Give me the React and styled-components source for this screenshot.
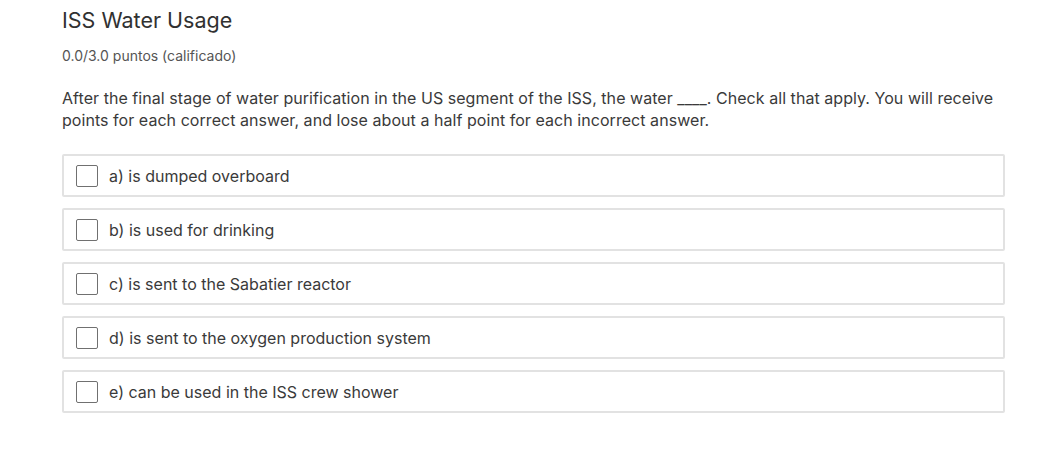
import React from "react";
import styled, { createGlobalStyle } from "styled-components";

const Global = createGlobalStyle`
  html, body { margin: 0; padding: 0; background: #fff; }
  body { font-family: Inter, "Open Sans", sans-serif; color: #333; }
`;

const Page = styled.div`
  padding: 6px 50px 0 62px;
  width: 943px;
`;

const Title = styled.h2`
  margin: 0;
  font-size: 21.5px;
  font-weight: 400;
  line-height: 28px;
  color: #313131;
`;

const Score = styled.div`
  margin-top: 13px;
  font-size: 14px;
  line-height: 18px;
  color: #555;
`;

const Prompt = styled.p`
  margin: 22px 0 0;
  font-size: 16px;
  letter-spacing: 0.05px;
  line-height: 22px;
  color: #3a3a3a;
`;

const Options = styled.div`
  margin-top: 23px;
  display: flex;
  flex-direction: column;
  gap: 11px;
`;

const Option = styled.label`
  display: flex;
  align-items: center;
  gap: 11px;
  height: 39px;
  padding: 0 12px;
  border: 2px solid #e2e2e2;
  border-radius: 2px;
  font-size: 16px;
  color: #3a3a3a;
`;

const Box = styled.span`
  width: 20px;
  height: 20px;
  border: 1px solid #707070;
  border-radius: 2px;
  background: #fff;
  flex: none;
`;

const options = [
  "a) is dumped overboard",
  "b) is used for drinking",
  "c) is sent to the Sabatier reactor",
  "d) is sent to the oxygen production system",
  "e) can be used in the ISS crew shower",
];

export default function App() {
  return (
    <>
      <Global />
      <Page>
        <Title>ISS Water Usage</Title>
        <Score>0.0/3.0 puntos (calificado)</Score>
        <Prompt>
          After the final stage of water purification in the US segment of the ISS, the water ____. Check all that apply. You will receive points for each correct answer, and lose about a half point for each incorrect answer.
        </Prompt>
        <Options>
          {options.map((o) => (
            <Option key={o}>
              <Box />
              {o}
            </Option>
          ))}
        </Options>
      </Page>
    </>
  );
}
